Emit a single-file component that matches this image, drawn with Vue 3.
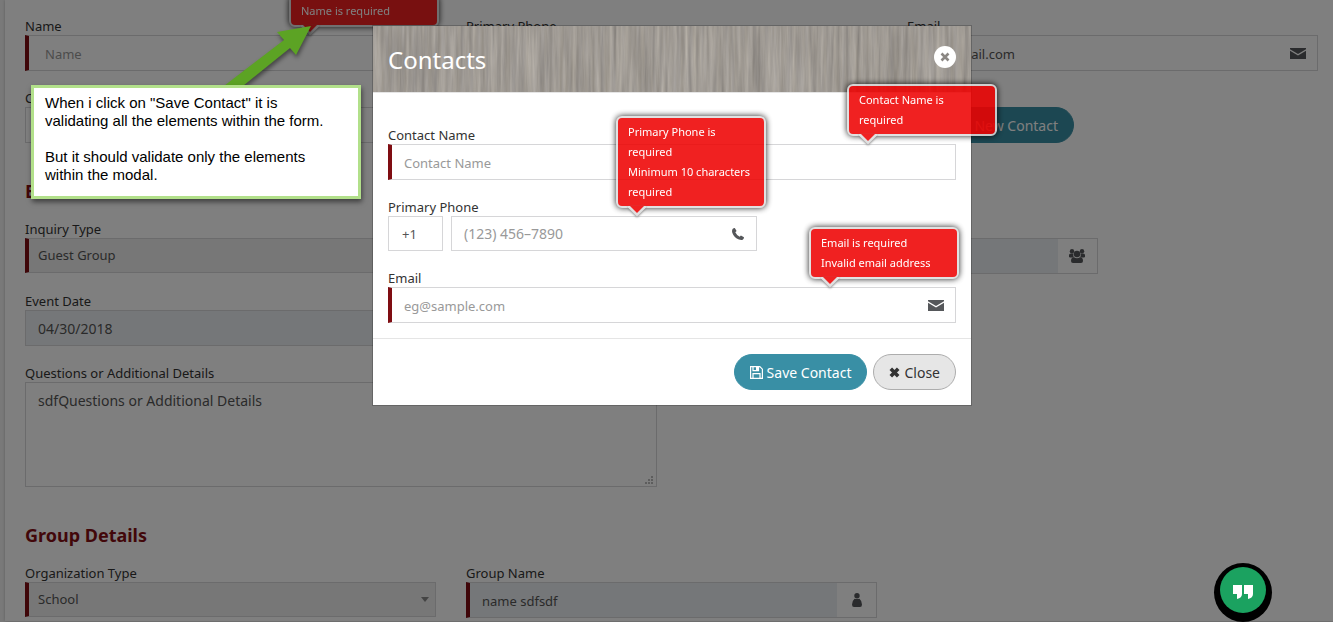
<script setup>
import { ref } from 'vue'

const contact = ref({ name: '', code: '+1', phone: '', email: '' })
const inquiry = ref({
  name: '',
  city: '',
  phone: '',
  email: 'eg@gmail.com',
  type: 'Guest Group',
  date: '04/30/2018',
  details: 'sdfQuestions or Additional Details',
  organization: 'School',
  groupName: 'name sdfsdf',
})
</script>

<template>
  <div class="page">
    <form class="card" @submit.prevent>
      <div class="grid">
        <div class="field">
          <label for="name">Name</label>
          <div class="control">
            <input id="name" v-model="inquiry.name" class="input required roomy" type="text" placeholder="Name" />
            <div class="tip" role="alert">
              <div class="tip-box">Name is required</div>
              <svg class="tip-tail" viewBox="0 0 18 11"><path d="M0 0H18V1.500L9 10.500L0 1.500Z" fill="#ddd" /><path d="M2 0H16L9 7Z" fill="#ee0101" /></svg>
            </div>
          </div>
        </div>
        <div class="field">
          <label for="phone">Primary Phone</label>
          <div class="control">
            <input id="phone" v-model="inquiry.phone" class="input required" type="tel" />
          </div>
        </div>
        <div class="field">
          <label for="email">Email</label>
          <div class="control">
            <input id="email" v-model="inquiry.email" class="input roomy" type="email" />
            <svg class="icon mail" viewBox="0 0 16 11"><path d="M0 0H16V1.300L8 6L0 1.300Z" /><path d="M0 2.800L8 7.500L16 2.800V11H0Z" /></svg>
          </div>
        </div>
        <div class="field">
          <label for="city">City</label>
          <div class="control"><input id="city" v-model="inquiry.city" class="input" type="text" /></div>
        </div>
        <div class="field action">
          <button class="btn primary add" type="button">Add New Contact</button>
        </div>
      </div>

      <h2>Event Details</h2>
      <div class="grid">
        <div class="field">
          <label for="type">Inquiry Type</label>
          <div class="control">
            <select id="type" v-model="inquiry.type" class="input required select"><option>Guest Group</option></select>
            <svg class="icon caret" viewBox="0 0 8 5"><path d="M0 0H8L4 5Z" /></svg>
          </div>
        </div>
        <div class="field fourth">
          <label for="guests">Guests</label>
          <div class="control group">
            <input id="guests" class="input muted" type="text" readonly />
            <span class="addon">
              <svg class="icon users" viewBox="0 0 16 14"><circle cx="3" cy="2.200" r="2.200" /><circle cx="13" cy="2.200" r="2.200" /><path d="M0 8V6Q0 4.500 2 4.500H4.600Q3.800 6.800 5 8.500H1Z" /><path d="M16 8V6Q16 4.500 14 4.500H11.400Q12.200 6.800 11 8.500H15Z" /><circle cx="8" cy="5" r="3.200" /><path d="M2 12Q2 8.300 5 8.300Q8 10 11 8.300Q14 8.300 14 12Q14 14 12 14H4Q2 14 2 12Z" /></svg>
            </span>
          </div>
        </div>
        <div class="field">
          <label for="date">Event Date</label>
          <div class="control"><input id="date" v-model="inquiry.date" class="input muted digits" type="text" readonly /></div>
        </div>
        <div class="field half">
          <label for="details">Questions or Additional Details</label>
          <div class="control">
            <textarea id="details" v-model="inquiry.details" class="input area"></textarea>
            <svg class="grip" viewBox="0 0 8 8"><path d="M6 0H8V2H6ZM6 3H8V5H6ZM3 3H5V5H3ZM6 6H8V8H6ZM3 6H5V8H3ZM0 6H2V8H0Z" /></svg>
          </div>
        </div>
      </div>

      <h2>Group Details</h2>
      <div class="grid">
        <div class="field">
          <label for="organization">Organization Type</label>
          <div class="control">
            <select id="organization" v-model="inquiry.organization" class="input required select"><option>School</option></select>
            <svg class="icon caret" viewBox="0 0 8 5"><path d="M0 0H8L4 5Z" /></svg>
          </div>
        </div>
        <div class="field">
          <label for="group">Group Name</label>
          <div class="control group">
            <input id="group" v-model="inquiry.groupName" class="input required muted" type="text" readonly />
            <span class="addon">
              <svg class="icon person" viewBox="0 0 10 14"><circle cx="5" cy="2.700" r="2.700" /><path d="M5 6Q6.500 6 7.500 5.800Q10 8 10 11.500Q10 14 8 14H2Q0 14 0 11.500Q0 8 2.500 5.800Q3.500 6 5 6Z" /></svg>
            </span>
          </div>
        </div>
      </div>
    </form>

    <div class="overlay">
      <section class="modal" role="dialog" aria-labelledby="modal-title">
        <header class="modal-head">
          <svg class="wood" aria-hidden="true">
            <filter id="grain" x="0" y="0" width="100%" height="100%" color-interpolation-filters="sRGB">
              <feTurbulence type="fractalNoise" baseFrequency="0.25 0.012" numOctaves="4" seed="8" />
              <feColorMatrix values="0.2 0.1 0 0 0.47  0.2 0.09 0 0 0.455  0.2 0.06 0 0 0.445  0 0 0 0 1" />
            </filter>
            <rect width="100%" height="100%" filter="url(#grain)" />
          </svg>
          <h1 id="modal-title">Contacts</h1>
          <button class="dismiss" type="button" aria-label="Dismiss">
            <svg viewBox="0 0 10 10"><path d="M1.500 1.500L8.500 8.500M8.500 1.500L1.500 8.500" fill="none" stroke="#8b8783" stroke-width="2.600" /></svg>
          </button>
        </header>

        <form id="contact-form" class="modal-body" @submit.prevent>
          <div class="field">
            <label for="c-name">Contact Name</label>
            <div class="control">
              <input id="c-name" v-model="contact.name" class="input required" type="text" placeholder="Contact Name" />
              <div class="tip outer" role="alert">
                <div class="tip-box">Contact Name is required</div>
                <svg class="tip-tail" viewBox="0 0 18 11"><path d="M0 0H18V1.500L9 10.500L0 1.500Z" fill="#ddd" /><path d="M2 0H16L9 7Z" fill="#ee0101" /></svg>
              </div>
            </div>
          </div>
          <div class="field">
            <label for="c-phone">Primary Phone</label>
            <div class="phone-row">
              <input v-model="contact.code" class="input short code" type="text" aria-label="Country code" />
              <div class="control">
                <input id="c-phone" v-model="contact.phone" class="input short digits" type="tel" placeholder="(123) 456–7890" />
                <svg class="icon call" viewBox="0 0 12 12"><path d="M2.800 0L4.600 3.100L3.300 4.300Q4.600 7.300 7.700 8.700L8.900 7.400L12 9.200Q12 10.800 11 11.400Q9.500 12.400 7 11.500Q2 9.700 .4 5Q-.5 2.300 .8 .8Q1.500 0 2.800 0Z" /></svg>
                <div class="tip near" role="alert">
                  <div class="tip-box">Primary Phone is required<br />Minimum 10 characters required</div>
                  <svg class="tip-tail" viewBox="0 0 18 11"><path d="M0 0H18V1.500L9 10.500L0 1.500Z" fill="#ddd" /><path d="M2 0H16L9 7Z" fill="#ee0101" /></svg>
                </div>
              </div>
            </div>
          </div>
          <div class="field">
            <label for="c-email">Email</label>
            <div class="control">
              <input id="c-email" v-model="contact.email" class="input required" type="email" placeholder="eg@sample.com" />
              <svg class="icon mail" viewBox="0 0 16 11"><path d="M0 0H16V1.300L8 6L0 1.300Z" /><path d="M0 2.800L8 7.500L16 2.800V11H0Z" /></svg>
              <div class="tip" role="alert">
                <div class="tip-box">Email is required<br />Invalid email address</div>
                <svg class="tip-tail" viewBox="0 0 18 11"><path d="M0 0H18V1.500L9 10.500L0 1.500Z" fill="#ddd" /><path d="M2 0H16L9 7Z" fill="#ee0101" /></svg>
              </div>
            </div>
          </div>
        </form>

        <footer class="modal-foot">
          <button class="btn primary" type="submit" form="contact-form">
            <svg class="save" viewBox="0 0 13 13"><path d="M.6 .6H9.800L12.400 3.200V12.400H.6Z" fill="none" stroke="#fff" stroke-width="1.200" /><path d="M3 .6V4.600H8.500V.6M3 12.400V7.600H10V12.400" fill="none" stroke="#fff" stroke-width="1.200" /><path d="M6 1H8V4H6Z" fill="#fff" /></svg>
            Save Contact
          </button>
          <button class="btn plain" type="button">
            <svg class="cross" viewBox="0 0 11 11"><path d="M1.800 1.800L9.200 9.200M9.200 1.800L1.800 9.200" fill="none" stroke="#333" stroke-width="3.600" /></svg>
            Close
          </button>
        </footer>
      </section>
    </div>

    <svg class="arrow" viewBox="0 0 100 70" aria-hidden="true">
      <path d="M91 6L57 12L64 20L0 69L18 70L70 28L76 35Z" fill="#5ca324" />
    </svg>
    <aside class="note">
      <p>When i click on "Save Contact" it is<br />validating all the elements within the form.</p>
      <p>But it should validate only the elements<br />within the modal.</p>
    </aside>

    <button class="fab" type="button" aria-label="Feedback">
      <svg viewBox="0 0 58 58"><circle cx="29" cy="26" r="23" fill="#1ba260" /><path d="M19 21H28V30Q28 34 23 35V30H19ZM30 21H39V30Q39 34 34 35V30H30Z" fill="#fff" /></svg>
    </button>
  </div>
</template>

<style>
body {
  margin: 0;
  overflow: hidden;
}
</style>

<style scoped>
* {
  box-sizing: border-box;
}
.page {
  position: relative;
  min-height: 100vh;
  padding: 0 0 1px 5px;
  overflow: hidden;
  background: #f3f3f3;
  color: #333;
  font-family: "Noto Sans", "Open Sans", sans-serif;
  font-size: 13px;
}
.card {
  padding: 17px 15px 3px 20px;
  background: #fff;
  box-shadow: 0 0 3px #bbb;
}
.grid {
  display: grid;
  grid-template-columns: repeat(6, 1fr);
  gap: 18px 30px;
}
.field {
  grid-column: span 2;
  min-width: 0;
}
.fourth {
  grid-column: 4 / span 2;
}
.half {
  grid-column: 1 / span 3;
}
.action {
  grid-column: 5 / span 2;
  align-self: end;
}
label {
  display: block;
  line-height: 18px;
}
h2 {
  margin: 36px 0 17px;
  color: #850f14;
  font-size: 18px;
  font-weight: 700;
  line-height: 24px;
}
.control {
  position: relative;
}
.input {
  display: block;
  width: 100%;
  height: 36px;
  margin: 0;
  padding: 2px 12px 0;
  border: 1px solid #d6d6d8;
  border-radius: 0;
  outline: 0;
  background: #fff;
  color: #555;
  font-family: inherit;
  font-size: 13px;
}
.input::placeholder {
  color: #999;
  opacity: 1;
}
.required {
  border-left: 4px solid #7f0d12;
}
.roomy {
  padding: 2px 16px 0;
}
.short {
  height: 35px;
  padding-top: 0;
}
.digits {
  padding-top: 0;
  font-size: 14px;
}
.select {
  height: 35px;
  padding: 0 9px 2px;
  appearance: none;
  background: #eee;
}
.muted {
  background: #ebeff2;
}
.area {
  height: 105px;
  padding: 8px 12px;
  font-size: 14px;
  line-height: 20px;
  resize: none;
}
.group {
  display: flex;
}
.addon {
  display: flex;
  flex: none;
  align-items: center;
  justify-content: center;
  width: 40px;
  border: 1px solid #d6d6d8;
  border-left: 0;
}
.group .input {
  flex: 1;
  min-width: 0;
  border-right: 0;
}
.icon {
  fill: #55575a;
}
.control > .icon {
  position: absolute;
  top: 0;
  bottom: 0;
  margin: auto 0;
}
.mail {
  right: 12px;
  width: 16px;
  height: 11px;
}
.call {
  right: 13px;
  width: 12px;
  height: 12px;
}
.control > .caret {
  right: 7px;
  width: 8px;
  height: 5px;
  fill: #888;
}
.users {
  width: 16px;
  height: 14px;
}
.person {
  width: 10px;
  height: 14px;
}
.grip {
  position: absolute;
  right: 4px;
  bottom: 3px;
  width: 8px;
  height: 8px;
  fill: #bbb;
}
.btn {
  display: inline-flex;
  align-items: center;
  justify-content: center;
  gap: 4px;
  height: 36px;
  padding: 0 15px;
  border: 1px solid #398fa5;
  border-radius: 18px;
  font-family: inherit;
  font-size: 14px;
}
.primary {
  background: #398fa5;
  color: #fff;
}
.plain {
  border-color: #adadad;
  background: #e6e6e6;
  color: #333;
}
.add {
  width: 167px;
  justify-content: flex-end;
}
.save {
  width: 13px;
  height: 13px;
}
.cross {
  width: 11px;
  height: 11px;
}
.overlay {
  position: absolute;
  inset: 0;
  padding: 25px 0 0 11px;
  background: rgba(0, 0, 0, 0.5);
}
.modal {
  width: 600px;
  max-width: 100%;
  margin: 0 auto;
  border: 1px solid rgba(0, 0, 0, 0.2);
  background: #fff;
  background-clip: padding-box;
}
.modal-head {
  position: relative;
  display: flex;
  align-items: center;
  justify-content: space-between;
  padding: 14px 15px 18px;
  border-bottom: 1px solid #e5e5e5;
}
.wood {
  position: absolute;
  inset: 0;
  width: 100%;
  height: 100%;
}
h1 {
  position: relative;
  margin: 0;
  padding-top: 6px;
  color: #fff;
  font-size: 24px;
  font-weight: 400;
  line-height: 28px;
}
.dismiss {
  position: relative;
  display: flex;
  align-items: center;
  justify-content: center;
  width: 22px;
  height: 22px;
  padding: 0;
  border: 0;
  border-radius: 50%;
  background: #fff;
}
.dismiss svg {
  width: 10px;
  height: 10px;
}
.modal-body {
  display: flex;
  flex-direction: column;
  gap: 18px;
  padding: 33px 15px 15px;
}
.phone-row {
  display: grid;
  grid-template-columns: 55px 306px;
  gap: 8px;
}
.code {
  padding: 0 13px;
}
.modal-foot {
  display: flex;
  justify-content: flex-end;
  gap: 6px;
  padding: 15px;
  border-top: 1px solid #e5e5e5;
}
.tip {
  position: absolute;
  right: -3px;
  bottom: calc(100% + 8px);
  width: 150px;
  opacity: 0.87;
}
.outer {
  right: -41px;
}
.near {
  right: -9px;
}
.tip-box {
  padding: 4px 10px;
  border: 2px solid #ddd;
  border-radius: 6px;
  background: #ee0101;
  box-shadow: 0 0 6px #000;
  color: #fff;
  font-size: 11px;
  line-height: 20px;
}
.tip-tail {
  position: absolute;
  top: calc(100% - 2px);
  left: 12px;
  width: 18px;
  height: 11px;
  filter: drop-shadow(0 1px 1px #777);
}
.arrow {
  position: absolute;
  top: 20px;
  left: 220px;
  width: 100px;
  height: 70px;
  filter: drop-shadow(1px 3px 2px rgba(0, 0, 0, 0.45));
}
.note {
  position: absolute;
  top: 85px;
  left: 31px;
  width: 330px;
  padding: 6px 11px 12px;
  border: 3px solid #b2e08a;
  background: #fff;
  box-shadow: 1px 3px 5px rgba(0, 0, 0, 0.5);
  color: #000;
  font-family: "Liberation Sans", Arial, sans-serif;
  font-size: 15px;
  line-height: 18px;
}
.note p {
  margin: 0;
}
.note p + p {
  margin-top: 18px;
}
.fab {
  position: absolute;
  right: 61px;
  bottom: 0;
  width: 58px;
  height: 59px;
  padding: 0;
  border: 0;
  border-radius: 50%;
  background: #000;
}
.fab svg {
  display: block;
  width: 58px;
  height: 58px;
}
</style>
